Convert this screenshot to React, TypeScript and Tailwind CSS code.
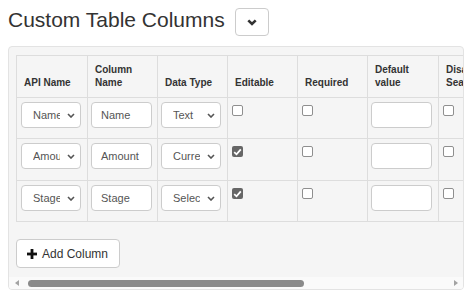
import React from 'react';

const rows = [
  { api: 'Name', col: 'Name', type: 'Text', editable: false },
  { api: 'Amount', col: 'Amount', type: 'Currency', editable: true },
  { api: 'Stage', col: 'Stage', type: 'Select', editable: true },
];

const widths = ['w-[71px]', 'w-[70px]', 'w-[70px]', 'w-[70px]', 'w-[70px]', 'w-[71px]', 'w-[70px]'];
const heads = ['API Name', 'Column Name', 'Data Type', 'Editable', 'Required', 'Default value', 'Disable Search'];

const Chevron = () => (
  <svg width="8" height="5" viewBox="0 0 8 5" fill="none">
    <path d="M1 1 L4 4 L7 1" stroke="#555" strokeWidth="1.6" />
  </svg>
);

const Select = ({ value }: { value: string }) => (
  <div className="flex items-center justify-between w-[60px] h-[26px] border border-[#cccccc] rounded bg-white pl-[11px] pr-[5px]">
    <span className="w-[27px] overflow-hidden whitespace-nowrap text-[11px] text-[#555]">{value}</span>
    <Chevron />
  </div>
);

const TextInput = ({ value }: { value: string }) => (
  <div className="flex items-center w-[61px] h-[26px] border border-[#cccccc] rounded bg-white pl-[9px] text-[11px] text-[#555]">
    {value}
  </div>
);

const Checkbox = ({ checked }: { checked?: boolean }) =>
  checked ? (
    <div className="mt-[3px] w-[11px] h-[11px] rounded-[2px] bg-[#666] flex items-center justify-center">
      <svg width="9" height="8" viewBox="0 0 9 8" fill="none">
        <path d="M1.2 4.2 L3.5 6.3 L7.8 1.4" stroke="white" strokeWidth="1.8" />
      </svg>
    </div>
  ) : (
    <div className="mt-[3px] w-[11px] h-[11px] rounded-[2px] border border-[#8f8f8f] bg-white" />
  );

export default function App() {
  return (
    <div className="w-[474px] h-[301px] bg-white pl-2 pt-2 font-['Liberation_Sans',Arial,sans-serif] text-[#333]">
      {/* Title */}
      <div className="flex items-start">
        <h1 className="text-[21px] leading-6 font-normal">Custom Table Columns</h1>
        <button className="ml-[10px] w-[34px] h-[28px] border border-[#cccccc] rounded bg-white flex items-center justify-center">
          <svg width="10" height="7" viewBox="0 0 10 7" fill="none">
            <path d="M1.3 1.3 L5 5 L8.7 1.3" stroke="#333" strokeWidth="2.6" />
          </svg>
        </button>
      </div>

      {/* Panel */}
      <div className="mt-[10px] w-[456px] border border-[#e3e3e3] rounded bg-[#f5f5f5] overflow-hidden">
        <div className="overflow-hidden pt-2 pl-[7px] pb-[9px]">
          <div className="w-max border-l border-t border-[#dddddd]">
            <div className="flex h-[42px]">
              {heads.map((h, i) => (
                <div key={h} className={`${widths[i]} shrink-0 border-r border-b border-[#dddddd] px-[7px] pb-2 flex items-end text-[10px] leading-[13px] font-bold`}>
                  <span>{h}</span>
                </div>
              ))}
            </div>
            {rows.map((r, ri) => (
              <div key={r.api} className={`flex ${ri === 1 ? 'h-[42px]' : 'h-[41px]'}`}>
                <div className={`${widths[0]} shrink-0 border-r border-b border-[#dddddd] pt-[4px] pl-[4px]`}>
                  <Select value={r.api} />
                </div>
                <div className={`${widths[1]} shrink-0 border-r border-b border-[#dddddd] pt-[4px] pl-[3px]`}>
                  <TextInput value={r.col} />
                </div>
                <div className={`${widths[2]} shrink-0 border-r border-b border-[#dddddd] pt-[4px] pl-[3px]`}>
                  <Select value={r.type} />
                </div>
                <div className={`${widths[3]} shrink-0 border-r border-b border-[#dddddd] pt-[4px] pl-[4px]`}>
                  <Checkbox checked={r.editable} />
                </div>
                <div className={`${widths[4]} shrink-0 border-r border-b border-[#dddddd] pt-[4px] pl-[4px]`}>
                  <Checkbox />
                </div>
                <div className={`${widths[5]} shrink-0 border-r border-b border-[#dddddd] pt-[4px] pl-[3px]`}>
                  <TextInput value="" />
                </div>
                <div className={`${widths[6]} shrink-0 border-r border-b border-[#dddddd] pt-[4px] pl-[4px]`}>
                  <Checkbox />
                </div>
              </div>
            ))}
          </div>

          <button className="mt-[17px] w-[104px] h-[29px] border border-[#cccccc] rounded bg-white flex items-center pl-[10px] gap-[5px] text-[12px] text-[#333]">
            <svg width="10" height="10" viewBox="0 0 10 10">
              <rect x="3.6" y="0" width="2.8" height="10" fill="#111" />
              <rect x="0" y="3.6" width="10" height="2.8" fill="#111" />
            </svg>
            Add Column
          </button>
        </div>

        {/* Scrollbar */}
        <div className="flex items-center h-[12px] bg-[#fafafa]">
          <div className="w-[15px] flex justify-center">
            <svg width="4" height="6" viewBox="0 0 4 6"><path d="M4 0 L0 3 L4 6 Z" fill="#a3a3a3" /></svg>
          </div>
          <div className="ml-[4px] w-[276px] h-[7px] rounded-full bg-[#8a8a8a]" />
          <div className="flex-1" />
          <div className="w-[15px] flex justify-center">
            <svg width="4" height="6" viewBox="0 0 4 6"><path d="M0 0 L4 3 L0 6 Z" fill="#a3a3a3" /></svg>
          </div>
        </div>
      </div>
    </div>
  );
}
